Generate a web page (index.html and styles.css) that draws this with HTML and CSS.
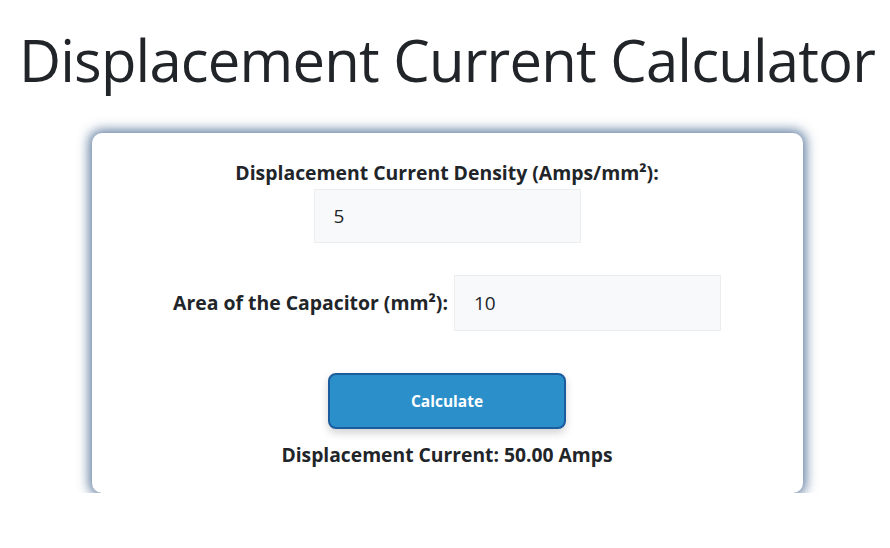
FILE: index.html
```html
<!DOCTYPE html>
<html>

<head>
  <title>Displacement Current Calculator</title>
  <link rel="stylesheet" href="styles.css">
</head>

<body>
  <h1>Displacement Current Calculator</h1>
  <div id="calculator">
    <div class="form-row">
      <label for="density">Displacement Current Density (Amps/mm²):</label>
      <input type="number" id="density" value="5">
    </div>
    <div class="form-row">
      <label for="area">Area of the Capacitor (mm²):</label>
      <input type="number" id="area" value="10">
    </div>
    <button id="button-calculate" class="calc-btn">Calculate</button>
    <p id="result">Displacement Current: 50.00 Amps</p>
  </div>
</body>

</html>
```

FILE: styles.css
```css
body {
  margin: 0;
  padding-left: 4px;
  background-color: #FFF;
  color: #212529;
  font-family: "Open Sans", sans-serif;
  text-align: center;
}

h1 {
  font-size: 58px;
  font-weight: 400;
  letter-spacing: -0.8px;
  margin: 25px 0 38px;
  line-height: 70px;
  white-space: nowrap;
}

#calculator {
  width: 671px;
  margin: 0 auto;
  padding: 27px 20px 26px;
  border-radius: 10px;
  background-color: #FFF;
  box-shadow: 0px 0px 12px 3px rgba(30, 70, 120, 0.7);
}

.form-row {
  display: flex;
  flex-wrap: wrap;
  justify-content: center;
  align-items: center;
  column-gap: 6px;
  row-gap: 3px;
  margin-bottom: 32px;
}

.form-row + .form-row {
  margin-bottom: 42px;
}

label {
  font-size: 19.4px;
  font-weight: 700;
  line-height: 26px;
}

input {
  width: 267px;
  height: 54px;
  box-sizing: border-box;
  padding: 0 19px;
  border: 1px solid #EBEDEF;
  background-color: #F8F9FA;
  font-family: inherit;
  font-size: 19px;
  color: #212529;
  -moz-appearance: textfield;
}

#area {
  height: 56px;
}

input::-webkit-outer-spin-button,
input::-webkit-inner-spin-button {
  -webkit-appearance: none;
  margin: 0;
}

.calc-btn {
  display: block;
  width: 238px;
  height: 56px;
  margin: 0 auto;
  border: 2px solid #1A5C9E;
  border-radius: 8px;
  background-color: #2B8FCA;
  color: #FFF;
  font-family: inherit;
  font-size: 15.5px;
  font-weight: 700;
  box-shadow: 0px 4px 8px rgba(0, 0, 0, 0.18);
}

#result {
  margin: 14px 0 0;
  font-size: 19.3px;
  font-weight: 700;
  line-height: 24px;
}
```
